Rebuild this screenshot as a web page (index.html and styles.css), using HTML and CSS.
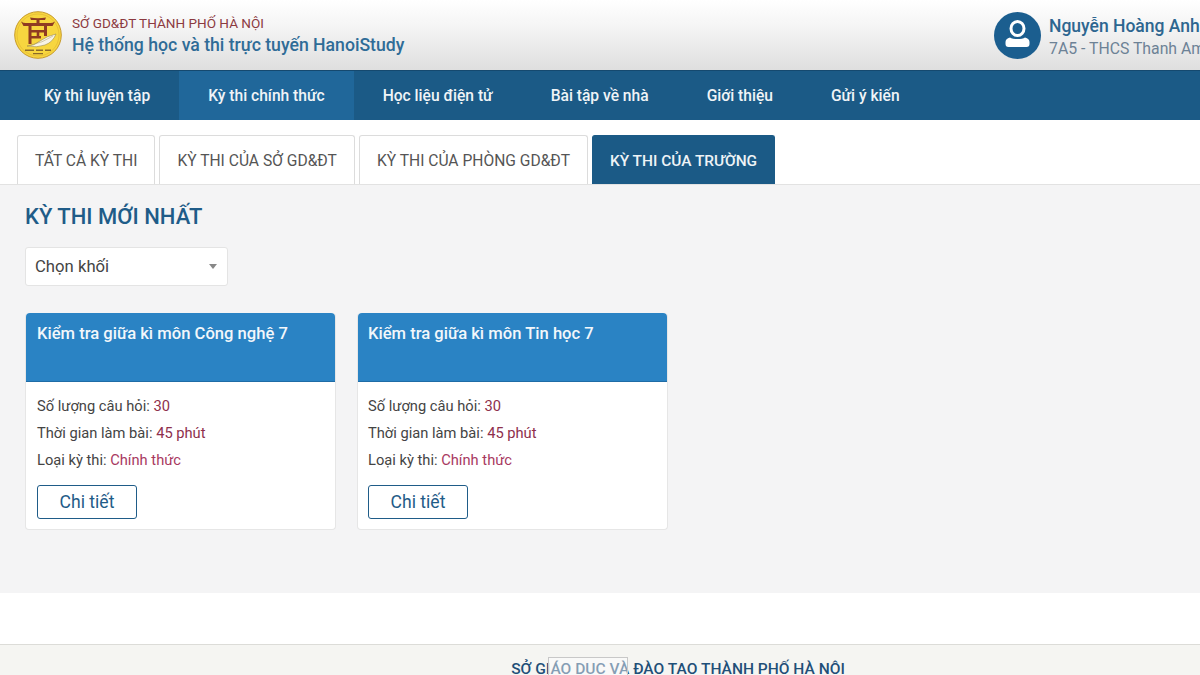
FILE: index.html

```html
<!DOCTYPE html>
<html lang="en">
<head>
  <meta charset="UTF-8" />
  <meta name="viewport" content="width=device-width, initial-scale=1.0"/>
  <title>HanoiStudy</title>
  <link rel="stylesheet" href="styles.css">
</head>
<body>
  <header class="top">
    <div class="brand">
      <svg class="logo" width="48" height="48" viewBox="0 0 48 48">
        <circle cx="24" cy="24" r="23.300" fill="#f7d63f" stroke="#c79a2c" stroke-width="1"/>
        <circle cx="24" cy="24" r="21" fill="none" stroke="#dfb233" stroke-width=".6"/>
        <path d="M16 6.500 Q24 8 32 6.500 L31 9 H17Z" fill="#8f3b22"/>
        <path d="M22.500 9h3v3h-3z" fill="#8f3b22"/>
        <path d="M7 10.500 Q10 12.500 13 12 H35 Q38 12.500 41 10.500 L38.500 15 H9.500Z" fill="#8f3b22"/>
        <path d="M14.500 15h3v18h-3zM30 15h3v10h-3zM14.500 19h18.500v2.500H14.500zM22.700 21h2.600v5h-2.600zM17 25h10v2.500H17z" fill="#8f3b22"/>
        <path d="M13 35 Q20 35 26 30 Q33 25 42 23 Q39 31 31 34 Q23 37 13 35Z" fill="#f7f3e6" stroke="#8d7a3a" stroke-width=".5"/>
        <path d="M17 34 Q28 32 39 25" fill="none" stroke="#a89a6a" stroke-width=".5"/>
        <path d="M11 38.500h9v1.500h-9zM22 38.500h7v1.500h-7zM31 38.500h6v1.500h-6zM19 42h10v1.300H19z" fill="#8a6a2a"/>
      </svg>
      <div class="brand-text">
        <div class="dept">SỞ GD&amp;ĐT THÀNH PHỐ HÀ NỘI</div>
        <div class="system">Hệ thống học và thi trực tuyến HanoiStudy</div>
      </div>
    </div>
    <div class="user">
      <svg class="avatar" width="47" height="47" viewBox="0 0 47 47">
        <circle cx="23.500" cy="23.500" r="23.500" fill="#1b5e8f"/>
        <ellipse cx="23.500" cy="16.500" rx="6.500" ry="7" fill="none" stroke="#fff" stroke-width="3"/>
        <path d="M16 25.500 C19 27.500 28 27.500 31 25.500 C34 26 35.500 28 35.500 30 V32 C35.500 34 34.500 35 32.500 35 H14.500 C12.500 35 11.500 34 11.500 32 V30 C11.500 28 13 26 16 25.500Z" fill="#fff"/>
      </svg>
      <div class="user-text">
        <div class="user-name">Nguyễn Hoàng Anh</div>
        <div class="user-class">7A5 - THCS Thanh Am</div>
      </div>
    </div>
  </header>

  <nav class="menu">
    <a href="#">Kỳ thi luyện tập</a>
    <a href="#" class="active">Kỳ thi chính thức</a>
    <a href="#">Học liệu điện tử</a>
    <a href="#">Bài tập về nhà</a>
    <a href="#">Giới thiệu</a>
    <a href="#">Gửi ý kiến</a>
  </nav>

  <div class="tabs">
    <a href="#" class="tab">TẤT CẢ KỲ THI</a>
    <a href="#" class="tab">KỲ THI CỦA SỞ GD&amp;ĐT</a>
    <a href="#" class="tab">KỲ THI CỦA PHÒNG GD&amp;ĐT</a>
    <a href="#" class="tab selected">KỲ THI CỦA TRƯỜNG</a>
  </div>

  <main class="content">
    <h2>KỲ THI MỚI NHẤT</h2>
    <div class="select">
      <span>Chọn khối</span>
      <i class="caret"></i>
    </div>
    <div class="cards">
      <div class="card">
        <div class="card-head">Kiểm tra giữa kì môn Công nghệ 7</div>
        <div class="card-body">
          <p>Số lượng câu hỏi: <b>30</b></p>
          <p>Thời gian làm bài: <b>45 phút</b></p>
          <p>Loại kỳ thi: <b class="kind">Chính thức</b></p>
          <a href="#" class="detail">Chi tiết</a>
        </div>
      </div>
      <div class="card">
        <div class="card-head">Kiểm tra giữa kì môn Tin học 7</div>
        <div class="card-body">
          <p>Số lượng câu hỏi: <b>30</b></p>
          <p>Thời gian làm bài: <b>45 phút</b></p>
          <p>Loại kỳ thi: <b class="kind">Chính thức</b></p>
          <a href="#" class="detail">Chi tiết</a>
        </div>
      </div>
    </div>
  </main>

  <footer class="foot">
    <div class="foot-title">SỞ GIÁO DỤC VÀ ĐÀO TẠO THÀNH PHỐ HÀ NỘI</div>
    <div class="foot-box"></div>
  </footer>
</body>
</html>
```

FILE: styles.css

```css
html, body {
  height: 675px;
  overflow: hidden;
}
body {
  margin: 0;
  font-family: Roboto, "Liberation Sans", sans-serif;
  background-color: #fff;
  color: #333;
}
a {
  text-decoration: none;
}

.top {
  height: 70px;
  display: flex;
  justify-content: space-between;
  align-items: center;
  background: linear-gradient(#ffffff, #f4f4f4 40%, #dfdfdf);
  overflow: hidden;
}
.brand {
  display: flex;
  align-items: center;
  gap: 10px;
  padding-left: 14px;
}
.logo {
  flex: none;
}
.brand-text {
  padding-top: 1px;
}
.dept {
  font-size: 13.550px;
  line-height: 18px;
  color: #8c3a3f;
}
.system {
  font-size: 17.650px;
  font-weight: 500;
  line-height: 26px;
  color: #2f6c97;
  white-space: nowrap;
}
.user {
  display: flex;
  align-items: center;
  gap: 8px;
  width: 206px;
  flex: none;
  white-space: nowrap;
}
.avatar {
  flex: none;
}
.user-text {
  padding-top: 4px;
}
.user-name {
  font-size: 17.500px;
  font-weight: 500;
  line-height: 24px;
  color: #2d6690;
}
.user-class {
  font-size: 15.800px;
  line-height: 22px;
  color: #6d8296;
}

.menu {
  height: 50px;
  box-sizing: border-box;
  display: flex;
  padding-left: 15px;
  background-color: #1b5a86;
  border-top: 1px solid #15496f;
}
.menu a {
  display: flex;
  align-items: center;
  padding: 0 29px;
  font-size: 15.600px;
  font-weight: 500;
  color: #f0f4f7;
}
.menu a.active {
  background-color: #20679a;
}

.tabs {
  height: 65px;
  box-sizing: border-box;
  display: flex;
  align-items: flex-end;
  gap: 4px;
  padding-left: 17px;
  border-bottom: 1px solid #e2e2e2;
}
.tab {
  height: 49px;
  box-sizing: border-box;
  display: flex;
  align-items: center;
  padding: 2px 17px 0;
  font-size: 15.620px;
  color: #555;
  background-color: #fff;
  border: 1px solid #dcdcdc;
  border-bottom: none;
  border-radius: 3px 3px 0 0;
}
.tab.selected {
  font-size: 15.450px;
  font-weight: 500;
  color: #eef3f6;
  background-color: #1b5a86;
  border-color: #1b5a86;
}

.content {
  height: 408px;
  box-sizing: border-box;
  padding: 19px 25px 0;
  background-color: #f4f4f5;
}
.content h2 {
  margin: 0 0 17px;
  font-size: 22px;
  font-weight: 500;
  line-height: 26px;
  color: #1f5c88;
}
.select {
  width: 203px;
  height: 39px;
  box-sizing: border-box;
  display: flex;
  align-items: center;
  justify-content: space-between;
  padding: 0 10px 0 9px;
  font-size: 16.700px;
  color: #444;
  background-color: #fff;
  border: 1px solid #e4e4e4;
  border-radius: 3px;
}
.caret {
  border-left: 4px solid transparent;
  border-right: 4px solid transparent;
  border-top: 5px solid #888;
}
.cards {
  display: flex;
  gap: 21px;
  margin-top: 27px;
}
.card {
  width: 311px;
  box-sizing: border-box;
  background-color: #fff;
  border: 1px solid #e6e6e6;
  border-top: none;
  border-radius: 4px;
}
.card-head {
  height: 69px;
  box-sizing: border-box;
  padding: 10px 10px;
  font-size: 16.600px;
  font-weight: 500;
  line-height: 21px;
  color: #f2f7fb;
  background-color: #2a83c4;
  border-bottom: 1px solid #1f6ca6;
  border-radius: 4px 4px 0 0;
}
.card-body {
  padding: 14px 10px 10px;
}
.card:first-child .card-head,
.card:first-child .card-body {
  padding-left: 11px;
}
.card-body p {
  margin: 0 0 7px;
  font-size: 14.700px;
  line-height: 20px;
  color: #444;
}
.card-body b {
  font-weight: 400;
  color: #8e2f4c;
}
.card-body b.kind {
  color: #a8395f;
}
.detail {
  display: block;
  width: 100px;
  height: 34px;
  box-sizing: border-box;
  margin-top: 15px;
  font-size: 17.600px;
  line-height: 32px;
  text-align: center;
  color: #1f5c88;
  border: 1px solid #1f5c88;
  border-radius: 3px;
}

.foot {
  position: relative;
  margin-top: 51px;
  height: 31px;
  box-sizing: border-box;
  padding-top: 14px;
  background-color: #f5f5f2;
  border-top: 1px solid #dcdcd8;
}
.foot-title {
  font-size: 15.550px;
  font-weight: 500;
  line-height: 20px;
  text-align: center;
  color: #1f4f78;
  padding-left: 156px;
}
.foot-box {
  position: absolute;
  left: 548px;
  top: 12px;
  width: 80px;
  height: 30px;
  box-sizing: border-box;
  background-color: rgba(255, 255, 255, 0.45);
  border: 1px solid #c8c8c8;
}
```
